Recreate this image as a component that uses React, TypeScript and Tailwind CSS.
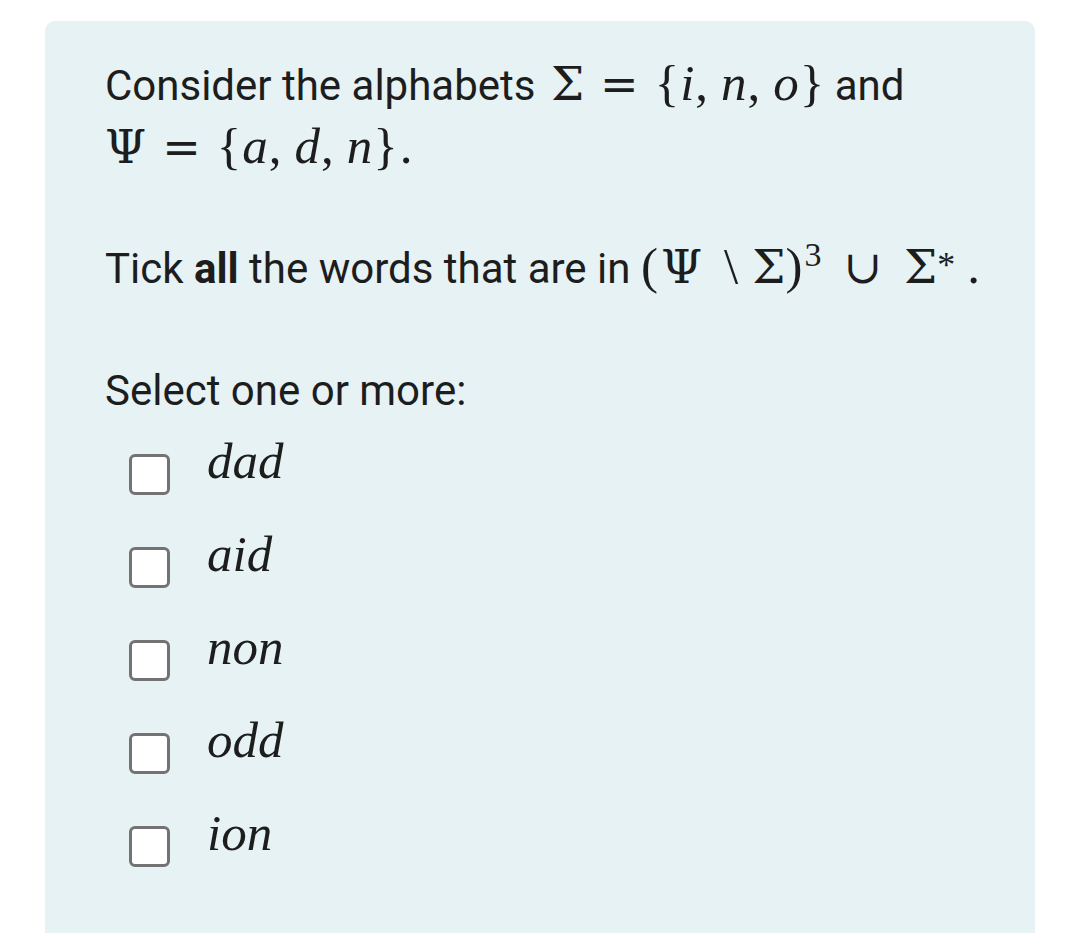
import React from 'react';

// KaTeX-ish inline math: Liberation Serif for letters, DejaVu Serif for Greek and operators
const M = ({ children }: { children: React.ReactNode }) => (
  <span className="font-['Liberation_Serif',serif] text-[51px] leading-none">{children}</span>
);
const G = ({ children, className = '' }: { children: React.ReactNode; className?: string }) => (
  <span className={`font-['DejaVu_Serif',serif] text-[47px] ${className}`}>{children}</span>
);
const I = ({ children }: { children: React.ReactNode }) => (
  <i className="italic mx-[1px]">{children}</i>
);
const Rel = ({ children }: { children: React.ReactNode }) => (
  <span className="mx-[16px] font-['DejaVu_Serif',serif] text-[46px]">{children}</span>
);
const Sep = () => <span className="mr-[12px]">,</span>;

const options = ['dad', 'aid', 'non', 'odd', 'ion'];

export default function App() {
  return (
    <div className="min-h-[933px] bg-white pt-[21px] px-[45px] font-['Roboto',sans-serif] text-[#1d1d1d]">
      <div className="min-h-[912px] rounded-t-[10px] bg-[#e6f2f4] pl-[60px] pr-[40px] pt-[33px] text-[42px] leading-[63px]">
        <p>
          Consider the alphabets{' '}
          <M>
            <G className="ml-[5px]">Σ</G>
            <Rel>=</Rel>
            {'{'}
            <I>i</I>
            <Sep />
            <I>n</I>
            <Sep />
            <I>o</I>
            {'}'}
          </M>{' '}
          and
          <br />
          <M>
            <G>Ψ</G>
            <Rel>=</Rel>
            {'{'}
            <I>a</I>
            <Sep />
            <I>d</I>
            <Sep />
            <I>n</I>
            {'}'}
            <span className="ml-[2px]">.</span>
          </M>
        </p>

        <p className="mt-[57px]">
          Tick <b className="font-bold">all</b> the words that are in{' '}
          <M>
            (<G className="ml-[3px]">Ψ</G>
            <span className="ml-[22px] mr-[14px]">\</span>
            <G>Σ</G>)
            <span className="ml-[2px] text-[34px] align-[17px]">3</span>
            <span className="mx-[22px] font-['DejaVu_Serif',serif] text-[46px]">∪</span>
            <G>Σ</G>
            <span className="text-[36px] align-[6px]">*</span>
            <span className="ml-[12px]">.</span>
          </M>
        </p>

        <p className="mt-[59px]">Select one or more:</p>

        <div className="mt-[6px] flex flex-col pl-[24px]">
          {options.map((o) => (
            <label key={o} className="flex h-[93px] items-start gap-[37px]">
              <span className="mt-[26px] h-[41px] w-[41px] shrink-0 rounded-[6px] border-[3px] border-[#737373] bg-white" />
              <span className="mt-[8px] font-['Liberation_Serif',serif] text-[51px] italic leading-none">{o}</span>
            </label>
          ))}
        </div>
      </div>
    </div>
  );
}
